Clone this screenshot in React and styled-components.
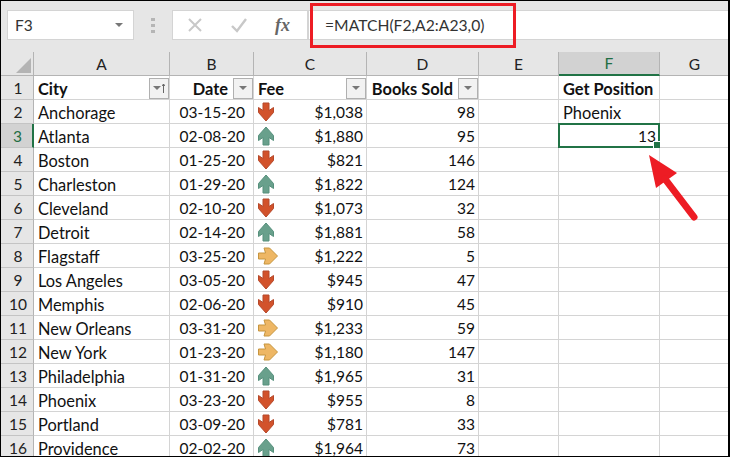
import React from 'react'
import styled, { createGlobalStyle } from 'styled-components'

const GlobalStyle = createGlobalStyle`
  html, body { margin: 0; padding: 0; background: #fff; }
  * { box-sizing: border-box; }
`

const Page = styled.div`
  position: relative;
  width: 730px;
  height: 457px;
  overflow: hidden;
  font-family: Lato, "Liberation Sans", sans-serif;
  font-size: 16.4px;
  color: #111;
  border: 1px solid #000;
  border-right-width: 2px;
  background: #fff;
`

const FormulaBar = styled.div`
  display: flex;
  align-items: stretch;
  height: 51px;
  padding-top: 9px;
  padding-bottom: 12px;
  background: #e6e6e6;
`

const NameBox = styled.div`
  display: flex;
  align-items: center;
  justify-content: space-between;
  width: 127px;
  margin-left: 6px;
  padding: 0 10px 0 7px;
  background: #fff;
  border: 1px solid #d4d4d4;
  font-size: 15.5px;
  color: #333;
`

const Caret = styled.span`
  width: 0;
  height: 0;
  border-left: 4px solid transparent;
  border-right: 4px solid transparent;
  border-top: 4px solid #777;
`

const Grip = styled.div`
  display: flex;
  flex-direction: column;
  justify-content: center;
  gap: 3px;
  width: 38px;
  padding-left: 17px;
  span { width: 4px; height: 3px; background: #b5b5b5; }
`

const FxBox = styled.div`
  display: flex;
  align-items: center;
  width: 136px;
  padding-left: 14px;
  gap: 28px;
  background: #fff;
  border: 1px solid #d4d4d4;
`

const Fx = styled.span`
  font-family: "Liberation Serif", serif;
  font-style: italic;
  font-weight: bold;
  font-size: 18px;
  color: #666;
`

const FormulaInput = styled.div`
  flex: 1;
  display: flex;
  align-items: center;
  padding-left: 16px;
  background: #fff;
  border: 1px solid #d4d4d4;
  border-right: 0;
  font-size: 15.7px;
  color: #333;
`

const RedBox = styled.div`
  position: absolute;
  left: 309px;
  top: 2px;
  width: 206px;
  height: 45px;
  border: 3px solid #ed1c24;
`

const Sheet = styled.div`
  display: grid;
  grid-template-columns: 33px 136px 84px 113px 112px 80px 101px 70px;
  grid-auto-rows: 24px;
`

const ColHead = styled.div`
  display: flex;
  align-items: center;
  justify-content: center;
  font-size: 15.5px;
  background: ${p => (p.$active ? '#d2d2d2' : '#e6e6e6')};
  color: ${p => (p.$active ? '#1f6e43' : '#222')};
  border-right: 1px solid #b4b4b4;
  border-bottom: ${p => (p.$active ? '2px solid #217346' : '1px solid #b4b4b4')};
`

const Corner = styled(ColHead)`
  position: relative;
  &::after {
    content: '';
    position: absolute;
    right: 2px;
    bottom: 2px;
    border-left: 15px solid transparent;
    border-bottom: 15px solid #b4b4b4;
  }
`

const RowHead = styled.div`
  display: flex;
  align-items: center;
  justify-content: center;
  padding-left: 2px;
  font-size: 15.5px;
  background: ${p => (p.$active ? '#d2d2d2' : '#e6e6e6')};
  color: ${p => (p.$active ? '#1f6e43' : '#222')};
  border-bottom: 1px solid #c4c4c4;
  border-right: ${p => (p.$active ? '2px solid #217346' : '1px solid #b4b4b4')};
`

const Cell = styled.div`
  position: relative;
  display: flex;
  align-items: center;
  justify-content: ${p => (p.$right ? 'flex-end' : 'flex-start')};
  padding: 1px 3px 0 4px;
  font-weight: ${p => (p.$bold ? 700 : 400)};
  white-space: nowrap;
  border-right: 1px solid #d4d4d4;
  border-bottom: 1px solid #d4d4d4;
`

const NumberCell = styled(Cell)`
  padding-top: 0;
  font-size: 15.5px;
`

const DateCell = styled(NumberCell)`
  padding-right: 8px;
`

const HeaderCell = styled(Cell)`
  justify-content: ${p => (p.$right ? 'flex-end' : 'space-between')};
  padding-right: 0;
`

const FeeCell = styled(NumberCell)`
  justify-content: space-between;
`

const Selected = styled.div`
  position: absolute;
  left: -1px;
  top: -1px;
  right: -1px;
  bottom: -1px;
  border: 2px solid #217346;
  &::after {
    content: '';
    position: absolute;
    right: -3px;
    bottom: -3px;
    width: 6px;
    height: 6px;
    background: #217346;
    border: 1px solid #fff;
  }
`

const FilterButton = styled.span`
  display: flex;
  align-items: center;
  justify-content: center;
  flex: none;
  gap: 1px;
  width: 20px;
  height: 21px;
  margin-left: 5px;
  background: #f2f2f2;
  border: 1px solid #b0b0b0;
`

const TrendIcon = styled.svg`
  display: block;
  flex: none;
  width: ${p => (p.$side ? '20px' : '17px')};
  height: 20px;
`

const Callout = styled.svg`
  position: absolute;
  left: 640px;
  top: 150px;
  width: 60px;
  height: 72px;
`

const arrowShapes = {
  down: { box: '0.5 0 17 20', d: 'M5.5 1h6v7.5L16 5.5v5L8.5 19L1 10.500v-5l4.500 3z', fill: '#d2522b', stroke: '#b5482a' },
  up: { box: '0.5 0 17 20', d: 'M5.500 19h6v-7.500l4.500 3v-5L8.500 1L1 9.500v5l4.500-3z', fill: '#69a08c', stroke: '#56907c' },
  side: { box: '0.5 0 20 20', d: 'M1 7h7L6.500 2H12l8 8l-8 8H6.500L8 13H1z', fill: '#eeb765', stroke: '#c6953f' },
}

const rows = [
  ['Anchorage', '03-15-20', 'down', '$1,038', 98],
  ['Atlanta', '02-08-20', 'up', '$1,880', 95],
  ['Boston', '01-25-20', 'down', '$821', 146],
  ['Charleston', '01-29-20', 'up', '$1,822', 124],
  ['Cleveland', '02-10-20', 'down', '$1,073', 32],
  ['Detroit', '02-14-20', 'up', '$1,881', 58],
  ['Flagstaff', '03-25-20', 'side', '$1,222', 5],
  ['Los Angeles', '03-05-20', 'down', '$945', 47],
  ['Memphis', '02-06-20', 'down', '$910', 45],
  ['New Orleans', '03-31-20', 'side', '$1,233', 59],
  ['New York', '01-23-20', 'side', '$1,180', 147],
  ['Philadelphia', '01-31-20', 'up', '$1,965', 31],
  ['Phoenix', '03-23-20', 'down', '$955', 8],
  ['Portland', '03-09-20', 'down', '$781', 33],
  ['Providence', '02-02-20', 'up', '$1,964', 73],
]

const Filter = ({ sorted }) => (
  <FilterButton>
    <Caret />
    {sorted && (
      <svg width="3" height="9" viewBox="0 0 3 9">
        <path d="M1.5 0v9M0 2l1.5-2L3 2" fill="none" stroke="#666" strokeWidth="1" />
      </svg>
    )}
  </FilterButton>
)

const Trend = ({ dir }) => {
  const s = arrowShapes[dir]
  return (
    <TrendIcon viewBox={s.box} $side={dir === 'side'}>
      <path d={s.d} fill={s.fill} stroke={s.stroke} strokeWidth="1" />
    </TrendIcon>
  )
}

export default function App() {
  return (
    <Page>
      <GlobalStyle />
      <FormulaBar>
        <NameBox>F3<Caret /></NameBox>
        <Grip><span /><span /><span /></Grip>
        <FxBox>
          <svg width="16" height="16" viewBox="0 0 16 16">
            <path d="M2 2l12 12M14 2L2 14" stroke="#c8c8c8" strokeWidth="2" fill="none" />
          </svg>
          <svg width="16" height="16" viewBox="0 0 16 16">
            <path d="M1 9l5 5l9-12" stroke="#c8c8c8" strokeWidth="2.4" fill="none" />
          </svg>
          <Fx>fx</Fx>
        </FxBox>
        <FormulaInput>=MATCH(F2,A2:A23,0)</FormulaInput>
      </FormulaBar>
      <RedBox />
      <Sheet>
        <Corner />
        {['A', 'B', 'C', 'D', 'E', 'F', 'G'].map(c => (
          <ColHead key={c} $active={c === 'F'}>{c}</ColHead>
        ))}

        <RowHead>1</RowHead>
        <HeaderCell $bold>City<Filter sorted /></HeaderCell>
        <HeaderCell $bold $right>Date<Filter /></HeaderCell>
        <HeaderCell $bold>Fee<Filter /></HeaderCell>
        <HeaderCell $bold $right>Books Sold<Filter /></HeaderCell>
        <Cell />
        <Cell $bold>Get Position</Cell>
        <Cell />

        {rows.map((r, i) => (
          <React.Fragment key={r[0]}>
            <RowHead $active={i === 1}>{i + 2}</RowHead>
            <Cell>{r[0]}</Cell>
            <DateCell $right>{r[1]}</DateCell>
            <FeeCell><Trend dir={r[2]} />{r[3]}</FeeCell>
            <NumberCell $right>{r[4]}</NumberCell>
            <Cell />
            {i === 0 && <Cell>Phoenix</Cell>}
            {i === 1 && <NumberCell $right>13<Selected /></NumberCell>}
            {i > 1 && <Cell />}
            <Cell />
          </React.Fragment>
        ))}
      </Sheet>
      <Callout viewBox="0 0 60 72">
        <path d="M8 4L36 22L15 37z" fill="#ed1c24" />
        <path d="M24 28L53 66" stroke="#ed1c24" strokeWidth="7" strokeLinecap="round" fill="none" />
      </Callout>
    </Page>
  )
}
